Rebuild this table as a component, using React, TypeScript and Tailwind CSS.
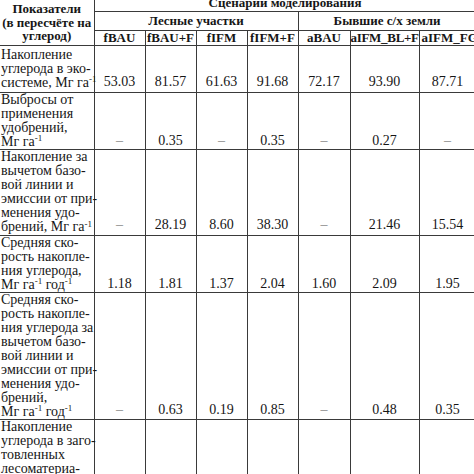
import React from "react";

const Sup = ({ children }: { children: React.ReactNode }) => (
  <sup className="text-[9px]">{children}</sup>
);

const Mg = () => (
  <>
    Мг га<Sup>-1</Sup>
  </>
);
const MgY = () => (
  <>
    Мг га<Sup>-1</Sup> год<Sup>-1</Sup>
  </>
);

type Row = { h: string; label: React.ReactNode[]; vals: string[]; pb: string };

const rows: Row[] = [
  {
    h: "h-[47px]",
    pb: "pb-[3px]",
    label: ["Накопление", "углерода в эко-", <>системе, <Mg /></>],
    vals: ["53.03", "81.57", "61.63", "91.68", "72.17", "93.90", "87.71"],
  },
  {
    h: "h-[55px]",
    pb: "pb-[1px]",
    label: ["Выбросы от", "применения", "удобрений,", <Mg />],
    vals: ["–", "0.35", "–", "0.35", "–", "0.27", "–"],
  },
  {
    h: "h-[86px]",
    pb: "pb-[3px]",
    label: ["Накопление за", "вычетом базо-", "вой линии и", "эмиссии от при-", "менения удо-", <>брений, <Mg /></>],
    vals: ["–", "28.19", "8.60", "38.30", "–", "21.46", "15.54"],
  },
  {
    h: "h-[55px]",
    pb: "pb-[1px]",
    label: ["Средняя ско-", "рость накопле-", "ния углерода,", <MgY />],
    vals: ["1.18", "1.81", "1.37", "2.04", "1.60", "2.09", "1.95"],
  },
  {
    h: "h-[125px]",
    pb: "pb-[2px]",
    label: [
      "Средняя ско-",
      "рость накопле-",
      "ния углерода за",
      "вычетом базо-",
      "вой линии и",
      "эмиссии от при-",
      "менения удо-",
      "брений,",
      <MgY />,
    ],
    vals: ["–", "0.63", "0.19", "0.85", "–", "0.48", "0.35"],
  },
  {
    h: "h-[72px]",
    pb: "pb-[2px]",
    label: ["Накопление", "углерода в заго-", "товленных", "лесоматериа-", <>лах, <Mg /></>],
    vals: ["61.19", "66.26", "68.79", "75.06", "2.06", "3.28", "0.93"],
  },
];

const heads = ["fBAU", "fBAU+F", "fIFM", "fIFM+F", "aBAU", "aIFM_BL+F", "aIFM_FG"];

export default function App() {
  const bd = "border border-[#3a3a3a]";
  return (
    <div
      className="w-[474px] h-[474px] overflow-hidden bg-white text-[#161616]"
      style={{ fontFamily: '"Liberation Serif", "Times New Roman", serif' }}
    >
      <table className="table-fixed border-collapse w-[476px] -mt-[5px]">
        <colgroup>
          <col className="w-[94px]" />
          <col className="w-[51px]" />
          <col className="w-[51px]" />
          <col className="w-[51px]" />
          <col className="w-[51px]" />
          <col className="w-[52px]" />
          <col className="w-[69px]" />
          <col className="w-[57px]" />
        </colgroup>
        <thead className="font-bold text-[13px] leading-[13.5px]">
          <tr className="h-[15px]">
            <td rowSpan={3} className={`${bd} border-l-0 p-0 text-center align-top`}>
              <div className="h-[48px] pt-[6px] flex flex-col items-center">
                <div>Показатели</div>
                <div>(в пересчёте на</div>
                <div>углерод)</div>
              </div>
            </td>
            <td colSpan={7} className={`${bd} p-0 pb-[1px] text-center align-bottom whitespace-nowrap`}>
              Сценарии моделирования
            </td>
          </tr>
          <tr className="h-[19px]">
            <td colSpan={4} className={`${bd} p-0 text-center align-middle`}>
              Лесные участки
            </td>
            <td colSpan={3} className={`${bd} p-0 text-center align-middle whitespace-nowrap`}>
              Бывшие с/х земли
            </td>
          </tr>
          <tr className="h-[15px]">
            {heads.map((h, i) => (
              <td
                key={h}
                className={`${bd} p-0 align-middle whitespace-nowrap ${i === 6 ? "text-left pl-[2px] overflow-visible" : i === 5 ? "text-center tracking-[-0.3px]" : "text-center"}`}
              >
                {h}
              </td>
            ))}
          </tr>
        </thead>
        <tbody className="text-[14px] leading-[14px]">
          {rows.map((r, ri) => (
            <tr key={ri} className={r.h}>
              <td className={`${bd} border-l-0 p-0 pl-[1px] align-middle text-left whitespace-nowrap`}>
                {r.label.map((l, li) => (
                  <div key={li}>{l}</div>
                ))}
              </td>
              {r.vals.map((v, vi) => (
                <td
                  key={vi}
                  className={`${bd} p-0 ${r.pb} align-bottom text-center whitespace-nowrap ${v === "–" ? "text-[#8a8a8a]" : ""}`}
                >
                  {v}
                </td>
              ))}
            </tr>
          ))}
        </tbody>
      </table>
    </div>
  );
}
